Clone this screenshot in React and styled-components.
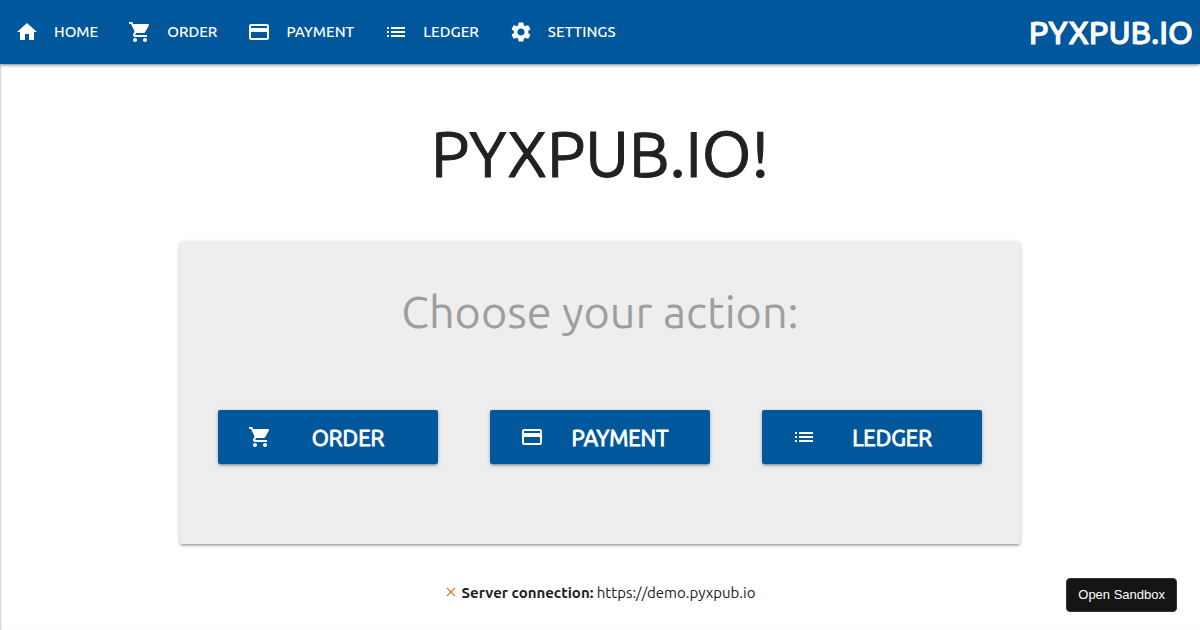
import React from "react";
import styled, { createGlobalStyle } from "styled-components";
import { MdHome, MdShoppingCart, MdPayment, MdList, MdSettings } from "react-icons/md";

const GlobalStyle = createGlobalStyle`
  * { box-sizing: border-box; }
  body {
    margin: 0;
    background: #fff;
    color: #212121;
    font-family: Ubuntu, "Noto Sans", "Open Sans", sans-serif;
    font-size: 15px;
    line-height: 24px;
  }
`;

const Page = styled.div`
  min-height: 100vh;
  display: flex;
  flex-direction: column;
`;

const NavBar = styled.nav`
  display: flex;
  align-items: center;
  justify-content: space-between;
  height: 64px;
  padding-right: 7px;
  background: #01579b;
  color: #fff;
  z-index: 1;
  box-shadow: 0 2px 2px 0 rgba(0, 0, 0, 0.14), 0 3px 1px -2px rgba(0, 0, 0, 0.12),
    0 1px 5px 0 rgba(0, 0, 0, 0.2);
`;

const NavList = styled.ul`
  display: flex;
  margin: 0;
  padding: 0;
  list-style: none;
`;

const NavLink = styled.a`
  display: flex;
  align-items: center;
  gap: 15px;
  height: 64px;
  padding: 0 15px;
  color: inherit;
  font-size: 15px;
  font-weight: 500;
  text-decoration: none;
`;

const Brand = styled.a`
  color: inherit;
  font-size: 32px;
  font-weight: 500;
  -webkit-text-stroke: 1px currentColor;
  line-height: 64px;
  text-decoration: none;
`;

const Main = styled.main`
  flex: 1;
  display: flex;
  flex-direction: column;
  align-items: center;
  box-shadow: inset 2px 0 2px -1px rgba(0, 0, 0, 0.2);
`;

const Title = styled.h1`
  margin: 54px 0;
  font-size: 64px;
  font-weight: 400;
  -webkit-text-stroke: 1px currentColor;
  line-height: 70px;
`;

const Card = styled.section`
  width: 70%;
  padding: 38px 12px 80px;
  border-radius: 2px;
  background: #eee;
  text-align: center;
  box-shadow: 0 2px 2px 0 rgba(0, 0, 0, 0.14), 0 3px 1px -2px rgba(0, 0, 0, 0.12),
    0 1px 5px 0 rgba(0, 0, 0, 0.2);
`;

const CardTitle = styled.h2`
  margin: 0 0 66px;
  color: #9e9e9e;
  font-size: 45px;
  font-weight: 400;
  line-height: 64px;
`;

const Actions = styled.div`
  display: grid;
  grid-template-columns: repeat(3, 1fr);
  justify-items: center;
`;

const ActionButton = styled.button`
  display: flex;
  align-items: center;
  gap: 16px;
  width: 220px;
  height: 54px;
  padding: 0 30px;
  border: 0;
  border-radius: 2px;
  background: #01579b;
  color: #fff;
  font-family: inherit;
  font-size: 22px;
  font-weight: 400;
  cursor: pointer;
  box-shadow: 0 2px 2px 0 rgba(0, 0, 0, 0.14), 0 3px 1px -2px rgba(0, 0, 0, 0.12),
    0 1px 5px 0 rgba(0, 0, 0, 0.2);

  svg { flex: none; }
`;

const ActionLabel = styled.span`
  flex: 1;
  display: flex;
  justify-content: center;
  -webkit-text-stroke: 1px currentColor;
`;

const Status = styled.p`
  display: flex;
  align-items: center;
  gap: 5px;
  margin: 37px 0 0;
`;

const StatusLabel = styled.strong`
  font-weight: 600;
`;

const StatusIcon = styled.svg`
  width: 12px;
  height: 12px;
  margin-bottom: 3px;
  stroke: #d8813f;
  fill: none;
`;

const SandboxButton = styled.button`
  position: fixed;
  right: 23px;
  bottom: 18px;
  height: 34px;
  padding: 0 11px 2px;
  border: 1px solid #343434;
  border-radius: 4px;
  background: #151515;
  color: #fff;
  font-family: "Liberation Sans", Arial, sans-serif;
  font-size: 13px;
  cursor: pointer;
`;

const navItems = [
  { label: "HOME", Icon: MdHome },
  { label: "ORDER", Icon: MdShoppingCart },
  { label: "PAYMENT", Icon: MdPayment },
  { label: "LEDGER", Icon: MdList },
  { label: "SETTINGS", Icon: MdSettings },
];

export default function App() {
  return (
    <Page>
      <GlobalStyle />
      <NavBar>
        <NavList>
          {navItems.map(({ label, Icon }) => (
            <li key={label}>
              <NavLink href="#">
                <Icon size={24} aria-hidden="true" />
                {label}
              </NavLink>
            </li>
          ))}
        </NavList>
        <Brand href="#">PYXPUB.IO</Brand>
      </NavBar>
      <Main>
        <Title>PYXPUB.IO!</Title>
        <Card>
          <CardTitle>Choose your action:</CardTitle>
          <Actions>
            {navItems.slice(1, 4).map(({ label, Icon }) => (
              <ActionButton key={label} type="button">
                <Icon size={24} aria-hidden="true" />
                <ActionLabel>{label}</ActionLabel>
              </ActionButton>
            ))}
          </Actions>
        </Card>
        <Status>
          <StatusIcon viewBox="0 0 12 12" aria-hidden="true">
            <path d="M2 2l8 8M10 2l-8 8" strokeWidth="1.3" />
          </StatusIcon>
          <span>
            <StatusLabel>Server connection:</StatusLabel> https://demo.pyxpub.io
          </span>
        </Status>
      </Main>
      <SandboxButton type="button">Open Sandbox</SandboxButton>
    </Page>
  );
}
